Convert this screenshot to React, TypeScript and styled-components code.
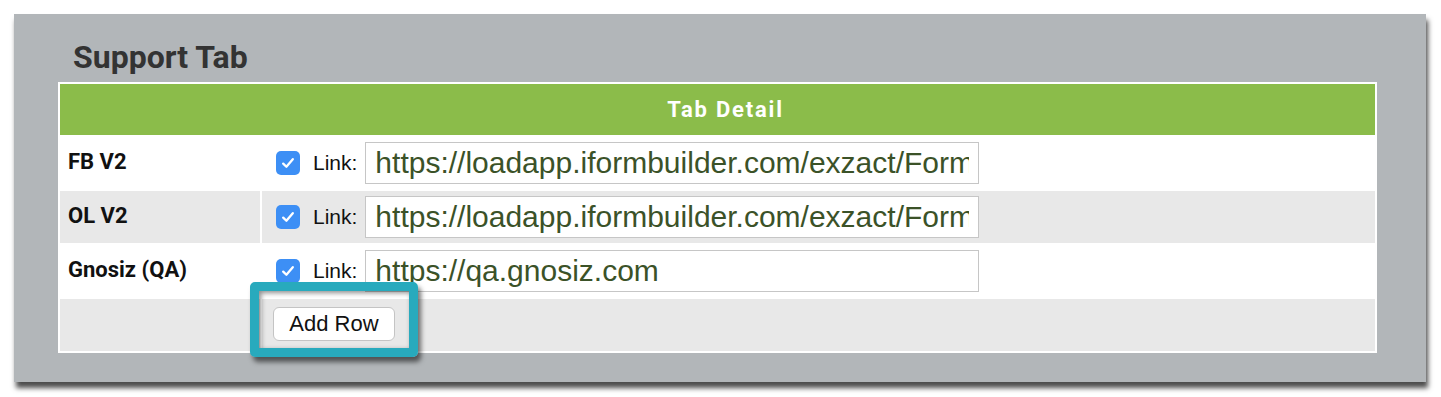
import styled, { createGlobalStyle } from 'styled-components'

const rows = [
	{ name: 'FB V2', link: 'https://loadapp.iformbuilder.com/exzact/Form', alt: false },
	{ name: 'OL V2', link: 'https://loadapp.iformbuilder.com/exzact/Form', alt: true },
	{ name: 'Gnosiz (QA)', link: 'https://qa.gnosiz.com', alt: false },
]

function CheckBox() {
	return (
		<Check>
			<svg width="16" height="16" viewBox="0 0 16 16">
				<path
					d="M3.2 8.6 L6.4 11.8 L12.8 4.2"
					fill="none"
					stroke="#fff"
					strokeWidth="2.3"
					strokeLinecap="round"
					strokeLinejoin="round"
				/>
			</svg>
		</Check>
	)
}

function App() {
	return (
		<>
			<GlobalStyle />
			<Page>
				<Panel>
					<Title>Support Tab</Title>
					<TableWrap>
						<Table>
							<thead>
								<tr>
									<HeaderCell colSpan={2}>Tab Detail</HeaderCell>
								</tr>
							</thead>
							<tbody>
								{rows.map((row) => (
									<Row key={row.name} $alt={row.alt}>
										<NameCell>{row.name}</NameCell>
										<Cell>
											<LinkLine>
												<CheckBox />
												<LinkLabel>Link:</LinkLabel>
												<LinkInput readOnly value={row.link} />
											</LinkLine>
										</Cell>
									</Row>
								))}
								<Row $alt>
									<NameCell />
									<Cell>
										<AddButton>Add Row</AddButton>
									</Cell>
								</Row>
							</tbody>
						</Table>
						<Highlight />
					</TableWrap>
				</Panel>
			</Page>
		</>
	)
}

const GlobalStyle = createGlobalStyle`
	body {
		margin: 0;
		background: #fff;
		font-family: Roboto, 'Liberation Sans', sans-serif;
	}
`

const Page = styled.div`
	padding: 14px 0 15px 14px;
`

const Panel = styled.div`
	width: 1412px;
	height: 368px;
	box-sizing: border-box;
	padding: 23px 0 0 44px;
	background: #b2b6b9;
	box-shadow: 2px 6px 5px rgba(0, 0, 0, 0.7);
`

const Title = styled.h2`
	margin: 0 0 5px 15px;
	font-family: Roboto, sans-serif;
	font-weight: 700;
	font-size: 32px;
	line-height: 40px;
	color: #333;
`

const TableWrap = styled.div`
	position: relative;
	width: 1319px;
`

const Table = styled.table`
	width: 100%;
	background: #fff;
	border-spacing: 2px;
`

const HeaderCell = styled.th`
	height: 51px;
	padding: 0 0 0 16px;
	background: #8bbc4a;
	color: #fff;
	font-family: Roboto, sans-serif;
	font-weight: 700;
	font-size: 22px;
	letter-spacing: 1.8px;
	text-align: center;
`

const Row = styled.tr<{ $alt?: boolean }>`
	background: ${(p) => (p.$alt ? '#e8e8e8' : '#fff')};
	height: 52px;
`

const NameCell = styled.td`
	width: 192px;
	padding: 0 0 4px 8px;
	vertical-align: middle;
	font-family: Roboto, sans-serif;
	font-weight: 700;
	font-size: 22px;
	color: #111;
`

const Cell = styled.td`
	padding: 0 0 0 11px;
	vertical-align: middle;
`

const LinkLine = styled.div`
	display: flex;
	align-items: center;
	height: 52px;
`

const Check = styled.span`
	display: inline-flex;
	align-items: center;
	justify-content: center;
	width: 24px;
	height: 24px;
	margin-left: 3px;
	border-radius: 5px;
	background: #3d8ff5;
`

const LinkLabel = styled.span`
	margin: 0 8px 0 13px;
	font-family: 'Liberation Sans', Arial, sans-serif;
	font-size: 21px;
	color: #111;
`

const LinkInput = styled.input`
	width: 614px;
	height: 42px;
	box-sizing: border-box;
	padding: 0 9px;
	border: 1px solid #c6c6c6;
	background: #fff;
	font-family: 'Liberation Sans', Arial, sans-serif;
	font-size: 30px;
	color: #3b5228;
	outline: none;
`

const AddButton = styled.button`
	width: 122px;
	height: 34px;
	padding: 0;
	margin-top: -2px;
	border: 1px solid #c4c4c4;
	border-radius: 6px;
	background: #fff;
	font-family: 'Liberation Sans', Arial, sans-serif;
	font-size: 22px;
	color: #111;
`

const Highlight = styled.div`
	position: absolute;
	left: 192px;
	top: 200px;
	width: 168px;
	height: 75px;
	box-sizing: border-box;
	border: 9px solid #28aabd;
	border-radius: 5px;
	box-shadow: 3px 5px 5px rgba(0, 0, 0, 0.55), inset 2px 2px 5px rgba(0, 0, 0, 0.45);
	pointer-events: none;
`

export default App
